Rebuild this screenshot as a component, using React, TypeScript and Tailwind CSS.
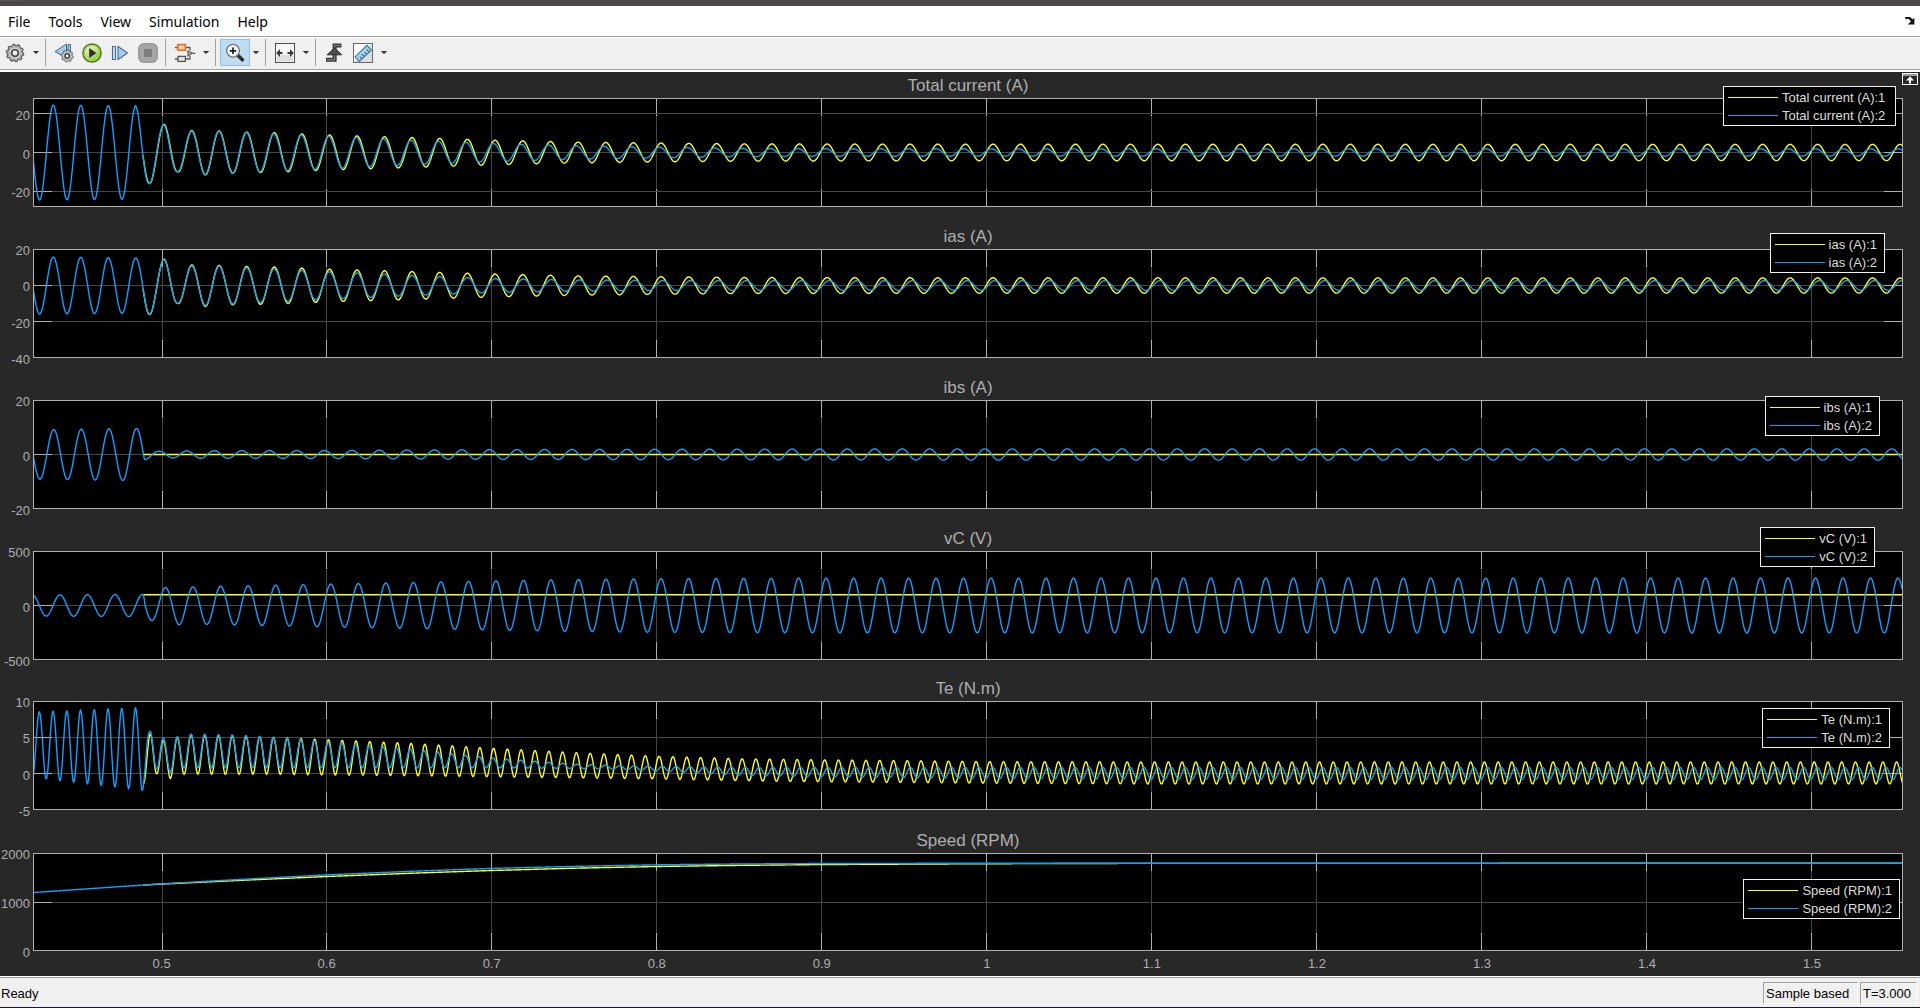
import React from "react";

/* ---------- signal model ---------- */

const T_START = 0.42209;
const T_END = 1.55509;
const T_SWITCH = 0.4885;
const LINE_FREQ = 60.022;
const PLOT_W = 1868;
const X_TICKS = [0.5, 0.6, 0.7, 0.8, 0.9, 1, 1.1, 1.2, 1.3, 1.4, 1.5];

type Key = number[];
type Signal = (t: number) => number;

const xOf = (t: number) => -0.5 + ((t - T_START) / (T_END - T_START)) * (PLOT_W + 1);

/* Linear interpolation over rows of [time, ...values]; returns the value in the given column. */
function at(keys: Key[], t: number, col: number): number {
  if (t <= keys[0][0]) return keys[0][col];
  for (let i = 1; i < keys.length; i++) {
    const a = keys[i - 1];
    const b = keys[i];
    if (t <= b[0]) return a[col] + ((b[col] - a[col]) * (t - a[0])) / (b[0] - a[0]);
  }
  return keys[keys.length - 1][col];
}

/* Rows: [time, upper envelope, lower envelope, delay in ms] */
const wave =
  (freq: number, peak: number, keys: Key[]): Signal =>
  (t) => {
    const hi = at(keys, t, 1);
    const lo = at(keys, t, 2);
    const delay = at(keys, t, 3) / 1000;
    return (hi + lo) / 2 + ((hi - lo) / 2) * Math.cos(2 * Math.PI * freq * (t - peak - delay));
  };

const sym = (rows: Key[]): Key[] => rows.map(([t, a, d]) => [t, a, -a, d]);
const line = (rows: Key[]): Signal => (t) => at(rows, t, 1);

/* Runs one signal up to the switching instant, then blends into the other. */
const switched =
  (before: Signal, after: Signal, blend: number): Signal =>
  (t) => {
    if (t < T_SWITCH) return before(t);
    const k = Math.min(1, (t - T_SWITCH) / blend);
    return (1 - k) * before(T_SWITCH) + k * after(t);
  };

const AC_PEAK = 0.43409;
const TE_PEAK = 0.42561;

const mainCurrent = wave(LINE_FREQ, AC_PEAK, sym([
  [T_SWITCH, 17, 0], [0.492, 16.2, 0.1], [0.501, 14.8, 0.7], [0.5095, 10, 0.7], [0.518, 11.4, 0.6],
  [0.526, 11.6, 0.6], [0.534, 11.2, 0.6], [0.543, 10.7, 0.6], [0.568, 10.3, 0.7], [0.6, 9.1, 0.85],
  [0.65, 7.8, 0.9], [0.7, 6.4, 1.2], [0.75, 5.4, 1.6], [0.8, 4.9, 1.9], [0.85, 4.5, 2.4],
  [0.9, 4.4, 2.6], [1, 4.3, 3.2], [1.6, 4.2, 3.3],
]));

const totalCurrent = wave(LINE_FREQ, AC_PEAK, sym([
  [0.42, 24.7, 0], [0.484, 24.2, 0], [0.492, 16.2, 0], [0.501, 14.4, 0.4], [0.5095, 9.9, 0.4],
  [0.518, 11.2, 0.4], [0.526, 11.4, 0.4], [0.551, 10.4, 0.4], [0.6, 8.5, 0.4], [0.65, 6.4, 0.3],
  [0.7, 4.7, 0.3], [0.75, 3.5, 0.5], [0.8, 2.8, 1], [0.85, 2.2, 1.4], [0.9, 2, 1.8],
  [1, 1.9, 2.2], [1.6, 1.9, 2.2],
]));

const iasTwo = wave(LINE_FREQ, AC_PEAK, sym([
  [0.42, 15.9, 0], [0.484, 15.3, 0], [0.492, 16, 0], [0.501, 14.5, 0.7], [0.5095, 9.8, 0.6],
  [0.518, 10.9, 0.6], [0.526, 11.1, 0.6], [0.551, 9.9, 0.6], [0.6, 7.7, 0.8], [0.65, 5.6, 0.9],
  [0.7, 3.9, 1.4], [0.75, 3.1, 2.4], [0.8, 2.8, 2.9], [0.85, 2.7, 3.6], [0.9, 2.7, 4],
  [1, 2.7, 4.4], [1.6, 2.7, 4.4],
]));

const ibsTwo = switched(
  wave(LINE_FREQ, AC_PEAK, sym([[0.42, 9.1, 0.2], [T_SWITCH, 9.7, 0.5]])),
  wave(LINE_FREQ, AC_PEAK, sym([
    [T_SWITCH, 1.9, -2.4], [0.498, 1.2, -2.4], [0.52, 1.4, -2.4], [0.6, 1.5, -2.3], [0.7, 1.8, -2.2],
    [0.85, 2, -2], [1, 2.1, -1.8], [1.6, 2.1, -1.8],
  ])),
  0.0008,
);

const vcTwo = switched(
  wave(LINE_FREQ, AC_PEAK, sym([[0.42, 97, 4], [T_SWITCH, 103, 4.1]])),
  wave(LINE_FREQ, AC_PEAK, sym([
    [T_SWITCH, 132, 1.6], [0.4935, 138, 1.3], [0.502, 167, 1.3], [0.51, 178, 1.3], [0.518, 172, 1.4],
    [0.55, 182, 1.5], [0.6, 198, 1.6], [0.65, 212, 1.7], [0.7, 228, 1.8], [0.75, 240, 1.8],
    [0.8, 248, 1.9], [0.9, 253, 2], [1.6, 254, 2],
  ])),
  0.0012,
);

const teOne = wave(2 * LINE_FREQ, TE_PEAK, [
  [T_SWITCH, 5.6, -1.4, 0.8], [0.493, 5.5, -1, 0.65], [0.497, 5.3, 0, 0.5], [0.501, 4.5, -0.3, 0.2],
  [0.5052, 4.8, -0.7, 0.3], [0.5093, 5, -0.4, 0.35], [0.5135, 5.2, -0.1, 0.35], [0.518, 5.4, -0.1, 0.35],
  [0.56, 5.1, -0.1, 0.35], [0.6, 4.7, -0.2, 0.35], [0.65, 4.2, -0.3, 0.5], [0.7, 3.5, -0.45, 0.5],
  [0.75, 2.9, -0.6, 0.7], [0.8, 2.4, -0.75, 0.85], [0.85, 2.05, -1, 1.2], [0.9, 1.9, -1.15, 1.3],
  [1, 1.65, -1.35, 1.4], [1.1, 1.6, -1.45, 1.35], [1.6, 1.6, -1.45, 1.35],
]);

const teTwo = wave(2 * LINE_FREQ, TE_PEAK, [
  [0.42, 8.5, -0.5, 0], [0.484, 9.1, -2.2, 0], [0.488, 9.1, -2.4, 0], [0.4925, 5.9, -0.6, 0.6],
  [0.497, 5.5, 0.7, 0.5], [0.501, 4.9, 0.4, 0.2], [0.5052, 5, 0.15, 0.3], [0.5093, 5.1, 0.4, 0.3],
  [0.5135, 5.3, 0.8, 0.3], [0.518, 5.5, 0.8, 0.3], [0.55, 5.3, 0.8, 0.3], [0.58, 4.8, 0.8, 0.2],
  [0.6, 4.4, 0.8, 0.1], [0.65, 3.4, 0.8, 0], [0.7, 2.15, 0.8, 0.1], [0.75, 1.3, 0.7, 0.9],
  [0.775, 1.1, 0.6, 2], [0.8, 1, 0.35, 2.85], [0.85, 0.85, -0.25, 3.2], [0.9, 0.85, -0.45, 3.3],
  [1, 0.85, -0.7, 3.2], [1.1, 0.85, -0.8, 3.3], [1.6, 0.85, -0.85, 3.3],
]);

const speedOne = line([
  [T_SWITCH, 1350], [0.5, 1370], [0.55, 1450], [0.6, 1526], [0.65, 1592], [0.7, 1650], [0.75, 1697],
  [0.8, 1732], [0.85, 1755], [0.9, 1772], [1, 1789], [1.1, 1797], [1.6, 1798],
]);
const speedTwo = line([
  [0.42, 1190], [T_SWITCH, 1350], [0.5, 1375], [0.55, 1470], [0.6, 1560], [0.65, 1632], [0.7, 1693],
  [0.75, 1735], [0.8, 1767], [0.85, 1784], [0.9, 1794], [1, 1800], [1.6, 1800],
]);

/* ---------- chart definitions ---------- */

interface ScopeChart {
  title: string;
  min: number;
  max: number;
  ticks: number[];
  innerH: number;
  titleClass: string;
  plotClass: string;
  legendClass: string;
  first: Signal;
  second: Signal;
}

const CHARTS: ScopeChart[] = [
  {
    title: "Total current (A)", min: -28, max: 28, ticks: [20, 0, -20], innerH: 107,
    titleClass: "h-[26px]", plotClass: "grow-109", legendClass: "-top-[13px] right-[6px] min-w-[173px]",
    first: mainCurrent, second: totalCurrent,
  },
  {
    title: "ias (A)", min: -40, max: 20, ticks: [20, 0, -20, -40], innerH: 107,
    titleClass: "h-[42px]", plotClass: "grow-109", legendClass: "-top-[17px] right-[17px]",
    first: mainCurrent, second: iasTwo,
  },
  {
    title: "ibs (A)", min: -20, max: 20, ticks: [20, 0, -20], innerH: 107,
    titleClass: "h-[42px]", plotClass: "grow-109", legendClass: "-top-[5px] right-[22px]",
    first: () => 0, second: ibsTwo,
  },
  {
    title: "vC (V)", min: -500, max: 500, ticks: [500, 0, -500], innerH: 107,
    titleClass: "h-[42px]", plotClass: "grow-109", legendClass: "-top-[25px] right-[27px]",
    first: () => 100, second: vcTwo,
  },
  {
    title: "Te (N.m)", min: -5, max: 10, ticks: [10, 5, 0, -5], innerH: 107,
    titleClass: "h-[41px]", plotClass: "grow-109", legendClass: "top-[6px] right-[12px]",
    first: teOne, second: teTwo,
  },
  {
    title: "Speed (RPM)", min: 0, max: 2000, ticks: [2000, 1000, 0], innerH: 96,
    titleClass: "h-[43px]", plotClass: "grow-98", legendClass: "top-[25px] right-[2px]",
    first: speedOne, second: speedTwo,
  },
];

const yOf = (c: ScopeChart, v: number) => -0.5 + ((c.max - v) / (c.max - c.min)) * (c.innerH + 1);
const snap = (n: number) => Math.floor(n) + 0.5;

function tracePath(c: ScopeChart, signal: Signal, from: number): string {
  const step = (T_END - T_START) / (PLOT_W * 2);
  let d = "";
  for (let t = from; t <= T_END; t += step) {
    d += `${d ? "L" : "M"}${xOf(t).toFixed(2)} ${yOf(c, signal(t)).toFixed(2)}`;
  }
  return d;
}

function Grid({ c }: { c: ScopeChart }) {
  const inner = c.ticks.filter((v) => v > c.min && v < c.max);
  const h = c.innerH;
  return (
    <g shapeRendering="crispEdges" strokeWidth={1}>
      {X_TICKS.map((t) => {
        const x = snap(xOf(t));
        return (
          <g key={t}>
            <line x1={x} x2={x} y1={0} y2={h} stroke="#464646" />
            <path d={`M${x} 0V17M${x} ${h}V${h - 17}`} stroke="#afafaf" />
          </g>
        );
      })}
      {inner.map((v) => {
        const y = snap(yOf(c, v));
        return (
          <g key={v}>
            <line x1={0} x2={PLOT_W} y1={y} y2={y} stroke="#464646" />
            <path d={`M0 ${y}H18M${PLOT_W} ${y}H${PLOT_W - 18}`} stroke="#afafaf" />
          </g>
        );
      })}
    </g>
  );
}

function Legend({ title, className }: { title: string; className: string }) {
  return (
    <ul className={`absolute border border-[#f0f0f0] bg-black py-px pr-[7px] pl-1 text-[13px] leading-4 text-[#dcdcdc] ${className}`}>
      <li className="flex items-center gap-1 whitespace-nowrap">
        <span className="h-px w-[50px] bg-[#ffff11]" />
        <span className="pt-0.5">{title}:1</span>
      </li>
      <li className="flex items-center gap-1 whitespace-nowrap">
        <span className="h-px w-[50px] bg-[#139fff]" />
        <span className="pt-0.5">{title}:2</span>
      </li>
    </ul>
  );
}

function Plot({ c }: { c: ScopeChart }) {
  return (
    <>
      <h2 className={`flex shrink-0 items-end justify-center pr-[17px] pb-0.5 pl-[33px] text-[17px] leading-5 text-[#afafaf] ${c.titleClass}`}>
        {c.title}
      </h2>
      <div className={`flex min-h-10 basis-0 pr-[17px] ${c.plotClass}`}>
        <div className="relative w-[33px] shrink-0">
          {c.ticks.map((v) => (
            <span
              key={v}
              className="absolute right-[3px] -translate-y-1/2 pt-[3px] text-[13px] leading-4 text-[#afafaf]"
              style={{ top: `${((c.max - v) / (c.max - c.min)) * 100}%` }}
            >
              {v}
            </span>
          ))}
        </div>
        <div className="relative flex-1 border border-[#afafaf] bg-black">
          <svg
            className="absolute inset-0 h-full w-full"
            viewBox={`0 0 ${PLOT_W} ${c.innerH}`}
            preserveAspectRatio="none"
            role="img"
            aria-label={c.title}
            fill="none"
          >
            <Grid c={c} />
            <path d={tracePath(c, c.first, T_SWITCH)} stroke="#ffff11" strokeWidth={1.4} vectorEffect="non-scaling-stroke" />
            <path d={tracePath(c, c.second, T_START)} stroke="#139fff" strokeWidth={1.4} vectorEffect="non-scaling-stroke" />
          </svg>
          <Legend title={c.title} className={c.legendClass} />
        </div>
      </div>
    </>
  );
}

/* ---------- toolbar ---------- */

const gearPath = (cx: number, cy: number, r: number, teeth: number) => {
  let d = "";
  const n = teeth * 4;
  for (let i = 0; i < n; i++) {
    const a = ((i + 0.5) / n) * Math.PI * 2;
    const rad = i % 4 < 2 ? r : r * 0.84;
    d += `${i ? "L" : "M"}${(cx + rad * Math.cos(a)).toFixed(2)} ${(cy + rad * Math.sin(a)).toFixed(2)}`;
  }
  return d + "Z";
};

const GearIcon = () => (
  <svg width="20" height="20" viewBox="0 0 20 20" aria-hidden="true">
    <path d={gearPath(10, 10, 8.8, 10)} fill="#b4b4b4" stroke="#5e5e5e" strokeWidth="1.2" strokeLinejoin="round" />
    <circle cx="10" cy="10" r="5.2" fill="#e2e2e2" />
    <circle cx="10" cy="10" r="3.4" fill="#f0f0f0" stroke="#4c4c4c" strokeWidth="1.9" />
  </svg>
);

const BackGearIcon = () => (
  <svg width="20" height="20" viewBox="0 0 20 20" aria-hidden="true">
    <path d="M1 8.5L12.5 1V15Z" fill="#a9cbe6" stroke="#3f6d94" strokeWidth="1" />
    <path d="M14 1.5h2.5V12H14z" fill="#a9cbe6" stroke="#3f6d94" strokeWidth="1" />
    <path d={gearPath(13.2, 13, 6, 8)} fill="#c4c4c4" stroke="#5a5a5a" strokeWidth="1" />
    <circle cx="13.2" cy="13" r="2.2" fill="#f4f4f4" stroke="#444" strokeWidth="1.5" />
  </svg>
);

const PlayIcon = () => (
  <svg width="20" height="20" viewBox="0 0 20 20" aria-hidden="true">
    <defs>
      <linearGradient id="play-fill" x1="0" y1="0" x2="0.6" y2="1">
        <stop offset="0" stopColor="#f6fbe6" />
        <stop offset="0.5" stopColor="#cfe695" />
        <stop offset="1" stopColor="#8cc63a" />
      </linearGradient>
    </defs>
    <circle cx="10" cy="10" r="9.1" fill="url(#play-fill)" stroke="#4b7a1c" strokeWidth="1.5" />
    <circle cx="10" cy="10" r="7.6" fill="none" stroke="#9fce4b" strokeWidth="1" />
    <path d="M7.2 5L14.4 10L7.2 15Z" fill="#2e2e2e" />
  </svg>
);

const StepIcon = () => (
  <svg width="20" height="20" viewBox="0 0 20 20" aria-hidden="true">
    <path d="M2.5 3.5h3v13h-3z" fill="#cfe2f2" stroke="#3f6d94" strokeWidth="1.1" />
    <path d="M8 3.5L17.5 10L8 16.5Z" fill="#a9cfee" stroke="#3f6d94" strokeWidth="1.1" />
  </svg>
);

const StopIcon = () => (
  <svg width="20" height="20" viewBox="0 0 20 20" aria-hidden="true">
    <rect x="0" y="0" width="20" height="20" rx="6" fill="#9b9b9b" />
    <rect x="1.5" y="1.5" width="17" height="17" rx="5" fill="#a6a6a6" />
    <rect x="6" y="6" width="8" height="8" fill="#7d7d7d" />
  </svg>
);

const BlocksIcon = () => (
  <svg width="22" height="20" viewBox="0 0 22 20" aria-hidden="true" fill="none">
    <path d="M1 4.5h3M1 16h3M11 4.5h5v3M11 16h5v-3" stroke="#5a5a5a" strokeWidth="1.3" />
    <path d="M18 10.3h3" stroke="#5a5a5a" strokeWidth="1.3" />
    <rect x="3.8" y="1.6" width="7.6" height="5.6" fill="#fbd3ae" stroke="#e0772a" strokeWidth="1.8" />
    <rect x="4" y="13.4" width="7.4" height="5" fill="#e4e4e4" stroke="#555" strokeWidth="1.3" />
    <path d="M14 8l4 2.3l-4 2.5z" fill="#ddd" stroke="#555" strokeWidth="1.2" />
  </svg>
);

const ZoomIcon = () => (
  <svg width="20" height="20" viewBox="0 0 20 20" aria-hidden="true">
    <path d="M12.5 12L17.4 16.8" stroke="#2f2f2f" strokeWidth="3.6" strokeLinecap="round" />
    <circle cx="8" cy="7.8" r="6.4" fill="#f3f7fa" stroke="#6d747b" strokeWidth="1.3" />
    <path d="M4.8 7.8h6.4M8 4.6V11" stroke="#1d1d1d" strokeWidth="1.7" />
  </svg>
);

const FitIcon = () => (
  <svg width="20" height="20" viewBox="0 0 20 20" aria-hidden="true">
    <rect x="0.5" y="0.5" width="19" height="19" fill="#f7f7f7" stroke="#505050" />
    <rect x="2" y="12" width="16" height="6.5" fill="#dedede" />
    <path d="M1.2 10L5 6V14ZM18.8 10L15 6V14Z" fill="#3a3a3a" />
    <path d="M4.5 10H7.5M15.5 10H12.5" stroke="#3a3a3a" strokeWidth="2" />
  </svg>
);

const TriggerIcon = () => (
  <svg width="20" height="20" viewBox="0 0 20 20" aria-hidden="true">
    <path d="M17.5 2.4H10.6V16.8H2" fill="none" stroke="#333" strokeWidth="4" />
    <path d="M17 2.4H10.6V16.8H2.6" fill="none" stroke="#7a7a7a" strokeWidth="1.4" />
    <path d="M3.4 11.8L10.6 4.8L17.6 11.8Z" fill="#4c4c4c" stroke="#2c2c2c" strokeWidth="1" />
  </svg>
);

const RulerIcon = () => (
  <svg width="20" height="20" viewBox="0 0 20 20" aria-hidden="true">
    <rect x="0.5" y="0.5" width="19" height="19" fill="#dcdcdc" stroke="#6b6b6b" />
    <path d="M1 19V1H19Z" fill="#fbfbfb" />
    <path d="M2 13.8L14 2.4L18.4 7L6.4 18.4Z" fill="#a5d0e8" stroke="#3f7899" strokeWidth="1.1" />
    <path d="M8.8 15.6L7 13.8M11.2 13.4L8.9 11.2M13.6 11.1L11.8 9.3M16 8.9L13.7 6.6" stroke="#2f6485" strokeWidth="1.1" />
  </svg>
);

function ToolButton({ label, wide, active, children }: { label: string; wide?: boolean; active?: boolean; children: React.ReactNode }) {
  return (
    <button
      type="button"
      aria-label={label}
      aria-pressed={active}
      className={`flex h-[27px] items-center justify-center ${wide ? "w-[30px]" : "w-7"} ${active ? "border border-[#8fc3ee] bg-[#c0dcf3]" : ""}`}
    >
      {children}
    </button>
  );
}

function Caret({ label }: { label: string }) {
  return (
    <button type="button" aria-label={label} className="flex h-[27px] w-3 items-center justify-center">
      <svg width="6" height="3" viewBox="0 0 6 3" aria-hidden="true">
        <path d="M0 0H6L3 3Z" fill="#2b2b2b" />
      </svg>
    </button>
  );
}

const Separator = () => <div className="mr-1 ml-[3px] h-[27px] w-px bg-[#a0a0a0]" />;

export default function App() {
  return (
    <div className="flex h-screen flex-col bg-[#282828] font-['Liberation_Sans',Arial,sans-serif]">
      <div className="h-[6px] shrink-0 bg-[#4b4946]">
        <div className="h-px w-[21px] bg-[#5a5855]" />
      </div>

      <nav className="flex h-[31px] shrink-0 items-center justify-between border-b border-[#a0a0a0] bg-white pr-[5px] pl-2 font-['Noto_Sans',sans-serif] text-[14px] text-black">
        <div className="flex gap-[18px]">
          {["File", "Tools", "View", "Simulation", "Help"].map((m) => (
            <button key={m} type="button">{m}</button>
          ))}
        </div>
        <button type="button" aria-label="Dock window">
          <svg width="10" height="8" viewBox="0 0 10 8" aria-hidden="true">
            <path d="M0.5 1.5Q3 -0.6 5.6 2.2L7.6 4.2" fill="none" stroke="#111" strokeWidth="2.4" />
            <path d="M9.4 0.8V7.4H2.8Z" fill="#111" />
          </svg>
        </button>
      </nav>

      <div className="flex h-[33px] shrink-0 items-start border-t border-b border-t-white border-b-[#a0a0a0] bg-[#f0f0f0] pt-px">
        <ToolButton label="Configuration properties" wide><GearIcon /></ToolButton>
        <Caret label="Configuration options" />
        <Separator />
        <ToolButton label="Step back options"><BackGearIcon /></ToolButton>
        <ToolButton label="Run"><PlayIcon /></ToolButton>
        <ToolButton label="Step forward"><StepIcon /></ToolButton>
        <ToolButton label="Stop"><StopIcon /></ToolButton>
        <Separator />
        <ToolButton label="Highlight block" wide><BlocksIcon /></ToolButton>
        <Caret label="Highlight options" />
        <Separator />
        <ToolButton label="Zoom" wide active><ZoomIcon /></ToolButton>
        <Caret label="Zoom options" />
        <Separator />
        <ToolButton label="Scale axes" wide><FitIcon /></ToolButton>
        <Caret label="Scale options" />
        <Separator />
        <ToolButton label="Triggers"><TriggerIcon /></ToolButton>
        <ToolButton label="Cursor measurements" wide><RulerIcon /></ToolButton>
        <Caret label="Measurement options" />
      </div>
      <div className="h-0.5 shrink-0 bg-white" />

      <main className="relative flex min-h-0 flex-1 flex-col">
        <button type="button" aria-label="Maximize axes" className="absolute top-px right-0.5">
          <svg width="16" height="12" viewBox="0 0 16 12" aria-hidden="true">
            <rect x="0.5" y="0.5" width="15" height="11" fill="#282828" stroke="#fff" />
            <rect x="1" y="1" width="14" height="2" fill="#9a9a9a" />
            <path d="M8 3.2L12 7.4H9V10.4H7V7.4H4Z" fill="#fff" />
          </svg>
        </button>
        {CHARTS.map((c) => (
          <Plot key={c.title} c={c} />
        ))}
        <div className="h-[25px] shrink-0 pr-[17px] pl-[33px]">
          <div className="relative h-full">
            {X_TICKS.map((t) => (
              <span
                key={t}
                className="absolute top-[5px] -translate-x-1/2 text-[13px] leading-4 text-[#afafaf]"
                style={{ left: `${((t - T_START) / (T_END - T_START)) * 100}%` }}
              >
                {t}
              </span>
            ))}
          </div>
        </div>
      </main>

      <footer className="shrink-0 border-t border-b border-t-white border-b-[#1c1826]">
        <div className="flex h-[30px] items-center justify-between border-t border-[#a0a0a0] bg-[#f0f0f0] pt-px pr-[3px] pl-px text-[13px] leading-4 text-black">
          <span className="pt-px">Ready</span>
          <div className="flex gap-0.5">
            <span className="h-[22px] w-[95px] border border-t-[#a0a0a0] border-r-white border-b-white border-l-[#a0a0a0] pt-[3px] pl-0.5">
              Sample based
            </span>
            <span className="h-[22px] w-[57px] border border-t-[#a0a0a0] border-r-white border-b-white border-l-[#a0a0a0] pt-[3px] pl-0.5">
              T=3.000
            </span>
          </div>
        </div>
      </footer>
    </div>
  );
}
